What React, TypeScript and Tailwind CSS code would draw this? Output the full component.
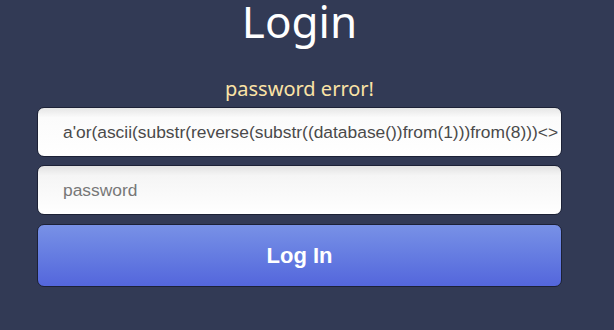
import React from "react";

export default function App() {
  return (
    <div className="w-[614px] h-[330px] bg-[#323a55] overflow-hidden">
      <div className="w-[599px] flex flex-col items-center">
        <div
          className="text-[44px] leading-[52px] h-[46px] text-white mt-[-5px]"
          style={{ fontFamily: '"Segoe UI", "Noto Sans", "Open Sans", sans-serif' }}
        >
          Login
        </div>
        <div
          className="mt-[38px] text-[20px] leading-none text-[#fbe3a6]"
          style={{ fontFamily: '"Segoe UI", "Noto Sans", "Open Sans", sans-serif' }}
        >
          password error!
        </div>
        <div
          className="mt-[8px] w-[525px] flex flex-col"
          style={{ fontFamily: '"Liberation Sans", Arial, sans-serif' }}
        >
          <div className="h-[50px] rounded-[7px] border border-[#1c2136] bg-gradient-to-b from-[#e6e6e6] via-[#fbfbfb] via-[20%] to-white flex items-center pl-[25px] text-[17.4px] text-[#4a4a4a] whitespace-nowrap overflow-hidden">
            a'or(ascii(substr(reverse(substr((database())from(1)))from(8)))&lt;&gt;
          </div>
          <div className="mt-[8px] h-[50px] rounded-[7px] border border-[#1c2136] bg-gradient-to-b from-[#e2e2e2] via-[#f5f5f5] via-[20%] to-white flex items-center pl-[25px] text-[17.4px] text-[#777777]">
            password
          </div>
          <div className="mt-[9px] h-[63px] rounded-[7px] border border-[#1c2136] bg-gradient-to-b from-[#7891e6] to-[#5466dc] flex items-center justify-center text-[22px] font-bold text-white">
            Log In
          </div>
        </div>
      </div>
    </div>
  );
}
